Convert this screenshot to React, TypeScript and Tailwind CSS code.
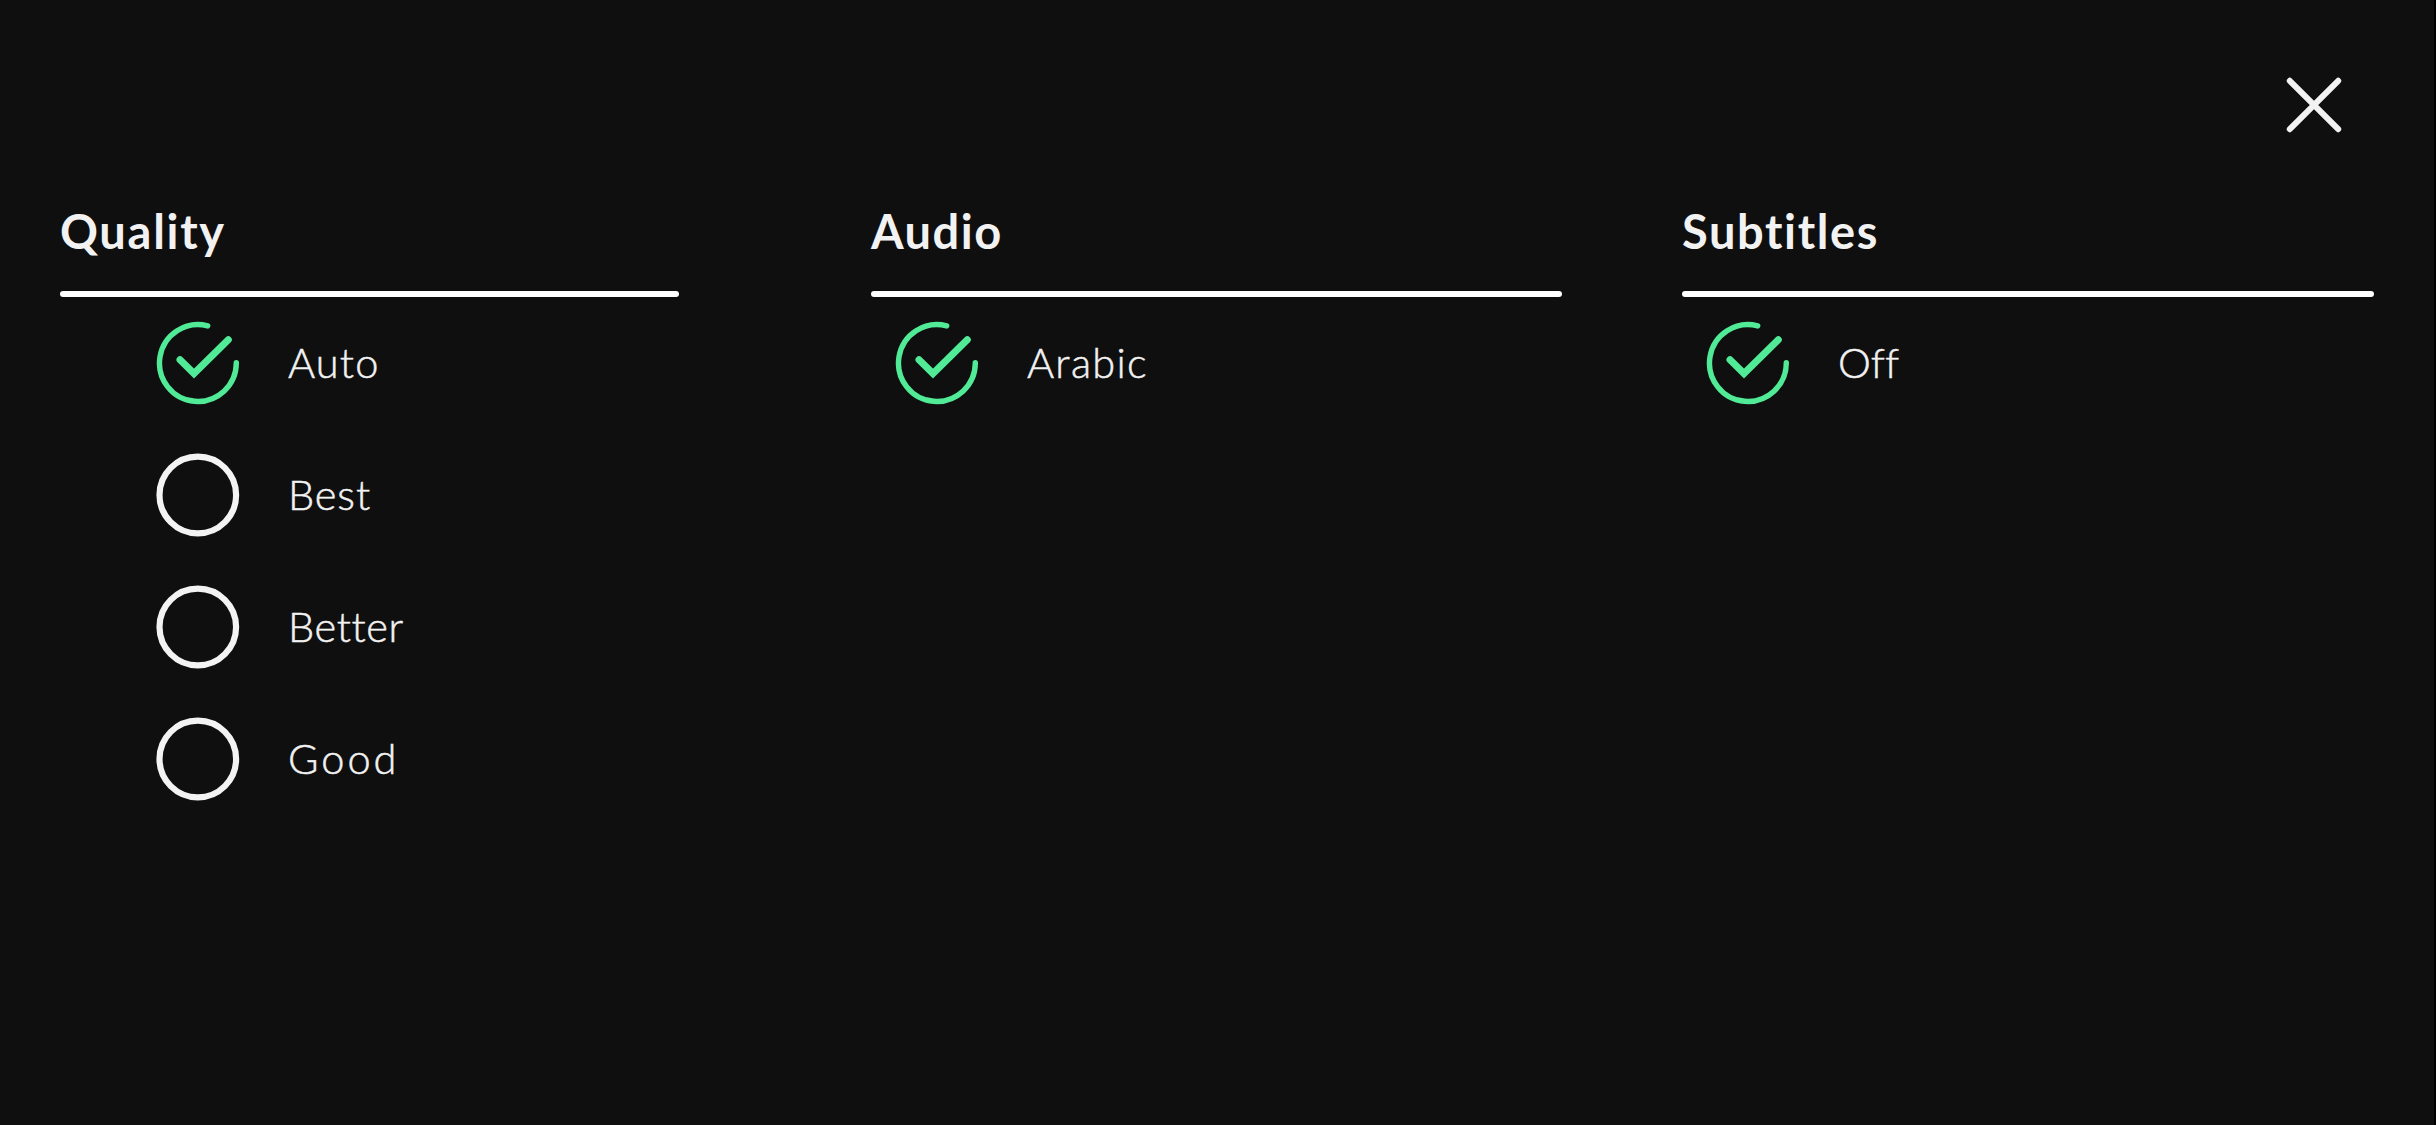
type Option = { label: string; selected?: boolean; tracking: string };

function CheckedIcon() {
  return (
    <svg className="size-[84px] shrink-0" viewBox="0 0 84 84" fill="none" stroke="#51eb98" strokeLinecap="round">
      <path d="M51.7 4.9A38.4 38.4 0 1 0 80.3 41.8" strokeWidth="5.4" />
      <path d="M24 38.7L38 52.6L72.3 18.7" strokeWidth="7" strokeLinejoin="miter" />
    </svg>
  );
}

function UncheckedIcon() {
  return (
    <svg className="size-[84px] shrink-0" viewBox="0 0 84 84" fill="none" stroke="#f3f3f3">
      <circle cx="41.8" cy="42" r="38.3" strokeWidth="6.2" />
    </svg>
  );
}

function OptionRow({ label, selected, tracking }: Option) {
  return (
    <li className="flex h-[132px] items-center gap-12">
      {selected ? <CheckedIcon /> : <UncheckedIcon />}
      <span className={`pb-[3px] text-[41.5px] leading-[50px] font-light whitespace-nowrap [-webkit-text-stroke:0.5px_#f2f2f2] ${tracking}`}>
        {label}
      </span>
    </li>
  );
}

function Section({ title, titleClass, className, listClass, options }: {
  title: string; titleClass: string; className: string; listClass: string; options: Option[];
}) {
  return (
    <section className={className}>
      <h2 className={`h-[88px] text-[47px] leading-[56px] font-bold whitespace-nowrap ${titleClass}`}>{title}</h2>
      <div className="h-1.5 rounded-full bg-white" />
      <ul className={listClass}>
        {options.map((o) => <OptionRow key={o.label} {...o} />)}
      </ul>
    </section>
  );
}

export default function App() {
  return (
    <main className="h-[1125px] w-[2436px] overflow-hidden border-r-2 border-black bg-[#0f0f0f] font-['Lato',sans-serif] text-[#f2f2f2] [font-variant-ligatures:none]">
      <header className="flex h-[203px] justify-end pt-[77px] pr-[92px]">
        <button aria-label="Close" className="size-14">
          <svg className="size-14" viewBox="0 0 56 56" fill="none" stroke="#f2f2f2" strokeWidth="6" strokeLinecap="round">
            <path d="M3.8 3.8L52.2 52.2M52.2 3.8L3.8 52.2" />
          </svg>
        </button>
      </header>
      <div className="flex pl-[60px]">
        <Section
          title="Quality"
          titleClass="tracking-[1.7px]"
          className="mr-48 w-[619px]"
          listClass="pl-24"
          options={[
            { label: "Auto", selected: true, tracking: "tracking-[1.2px]" },
            { label: "Best", tracking: "tracking-[0.9px]" },
            { label: "Better", tracking: "tracking-[0.6px]" },
            { label: "Good", tracking: "tracking-[3px]" },
          ]}
        />
        <Section
          title="Audio"
          titleClass="tracking-[1.5px]"
          className="mr-[120px] w-[691px]"
          listClass="pl-6"
          options={[{ label: "Arabic", selected: true, tracking: "tracking-[1.3px]" }]}
        />
        <Section
          title="Subtitles"
          titleClass="tracking-[1.6px]"
          className="w-[692px]"
          listClass="pl-6"
          options={[{ label: "Off", selected: true, tracking: "tracking-[0px]" }]}
        />
      </div>
    </main>
  );
}
